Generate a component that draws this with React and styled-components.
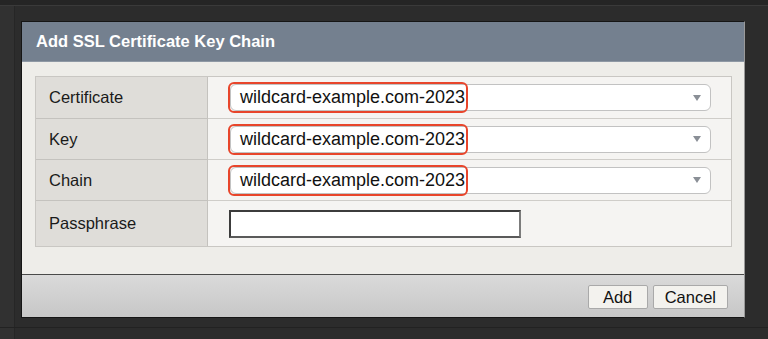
import styled, { createGlobalStyle } from "styled-components";

const GlobalStyle = createGlobalStyle`
  html, body {
    margin: 0;
    padding: 0;
    background: #2c2c2c;
    font-family: "Liberation Sans", Arial, Helvetica, sans-serif;
  }
  * {
    box-sizing: border-box;
  }
`;

const Page = styled.div`
  width: 768px;
  height: 339px;
  overflow: hidden;
  display: flex;
  flex-direction: column;
  background: #2c2c2c;
`;

const TopStrip = styled.div`
  height: 6px;
  background: #252525;
  border-bottom: 1px solid #3a3a3a;
`;

const Stage = styled.div`
  flex: 1;
  display: flex;
`;

const LeftRail = styled.div`
  width: 15px;
  background: #313131;
  border-right: 1px solid #262626;
`;

const Backdrop = styled.div`
  flex: 1;
  display: flex;
  flex-direction: column;
  padding: 15px 0 0 6px;
`;

const Dialog = styled.div`
  width: 724px;
  height: 297px;
  display: flex;
  flex-direction: column;
  border: 1px solid #151515;
  border-right-color: #9a9a9a;
  background: #eeede9;
`;

const TitleBar = styled.div`
  height: 40px;
  display: flex;
  align-items: center;
  padding-left: 14px;
  background: #74808f;
  border-bottom: 1px solid #8e98a4;
  color: #fff;
  font-size: 16.5px;
  font-weight: bold;
`;

const Body = styled.div`
  flex: 1;
  padding: 14px 12px 0 13px;
`;

const Table = styled.div`
  display: grid;
  grid-template-columns: 172px 1fr;
  border: 1px solid #c9c7c3;
  background: #f5f4f2;
`;

const Label = styled.div`
  height: ${({ $tall }) => ($tall ? "46px" : "41px")};
  display: flex;
  align-items: center;
  padding-left: 13px;
  background: #dfddd9;
  border-right: 1px solid #c4c2be;
  border-top: ${({ $first }) => ($first ? "none" : "1px solid #c4c2be")};
  color: #1a1a1a;
  font-size: 16.5px;
`;

const Value = styled.div`
  height: ${({ $tall }) => ($tall ? "46px" : "41px")};
  display: flex;
  align-items: center;
  padding: 0 20px 0 22px;
  border-top: ${({ $first }) => ($first ? "none" : "1px solid #cfcdc9")};
`;

const Select = styled.div`
  position: relative;
  flex: 1;
  height: 27px;
  display: flex;
  align-items: center;
  padding-left: 9px;
  background: #fff;
  border: 1px solid #c2c2c2;
  border-radius: 6px;
  color: #111;
  font-size: 18px;
`;

const Highlight = styled.span`
  position: absolute;
  left: -3px;
  top: -3px;
  width: 240px;
  height: 31px;
  border: 2.5px solid #e8452b;
  border-radius: 6px;
  pointer-events: none;
`;

const Arrow = styled.span`
  margin-left: auto;
  margin-right: 9px;
  width: 0;
  height: 0;
  border-left: 4px solid transparent;
  border-right: 4px solid transparent;
  border-top: 6px solid #8a8f96;
`;

const TextInput = styled.input`
  width: 292px;
  height: 28px;
  margin-left: -1px;
  padding: 0 6px;
  border: 2px solid #3c3c3c;
  border-right-color: #7c7c7c;
  border-bottom-color: #5a5a5a;
  background: #fff;
  font-size: 16px;
  font-family: inherit;
  outline: none;
`;

const Footer = styled.div`
  height: 43px;
  display: flex;
  justify-content: flex-end;
  align-items: flex-start;
  gap: 5px;
  padding: 10px 16px 0 0;
  border-top: 1px solid #4a4a4a;
  background: linear-gradient(#dadada, #c7c7c7);
`;

const Button = styled.button`
  min-width: 60px;
  height: 24px;
  padding: 0 11px;
  border: 1px solid #a9a9a9;
  border-radius: 2px;
  background: #f3f2ee;
  color: #111;
  font-family: inherit;
  font-size: 16.5px;
`;

const BottomRule = styled.div`
  margin: 9px 0 0 -22px;
  height: 1px;
  background: #222;
`;

const fields = [
  { label: "Certificate", value: "wildcard-example.com-2023" },
  { label: "Key", value: "wildcard-example.com-2023" },
  { label: "Chain", value: "wildcard-example.com-2023" },
];

export default function App() {
  return (
    <>
      <GlobalStyle />
      <Page>
        <TopStrip />
        <Stage>
          <LeftRail />
          <Backdrop>
            <Dialog>
              <TitleBar>Add SSL Certificate Key Chain</TitleBar>
              <Body>
                <Table>
                  {fields.map((f, i) => [
                    <Label key={f.label + "l"} $first={i === 0}>
                      {f.label}
                    </Label>,
                    <Value key={f.label + "v"} $first={i === 0}>
                      <Select>
                        {f.value}
                        <Highlight />
                        <Arrow />
                      </Select>
                    </Value>,
                  ])}
                  <Label $tall>Passphrase</Label>
                  <Value $tall>
                    <TextInput type="password" />
                  </Value>
                </Table>
              </Body>
              <Footer>
                <Button>Add</Button>
                <Button>Cancel</Button>
              </Footer>
            </Dialog>
            <BottomRule />
          </Backdrop>
        </Stage>
      </Page>
    </>
  );
}
